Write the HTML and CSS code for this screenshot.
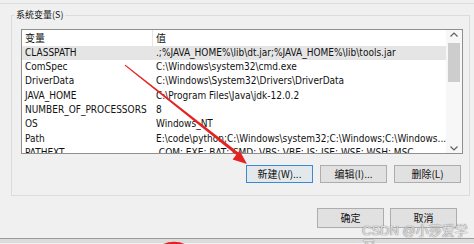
FILE: index.html
```html
<!DOCTYPE html>
<html lang="zh-CN">
<head>
    <meta charset="UTF-8">
    <meta name="viewport" content="width=device-width, initial-scale=1.0">
    <title>环境变量</title>
    <link rel="stylesheet" href="styles.css">
</head>
<body>
    <div class="topline"></div>

    <fieldset class="group">
        <legend>系统变量(S)</legend>
        <div class="listbox">
            <div class="vartable">
                <div class="row head"><div class="c1">变量</div><div class="c2">值</div></div>
                <div class="row sel"><div class="c1">CLASSPATH</div><div class="c2">.;%JAVA_HOME%\lib\dt.jar;%JAVA_HOME%\lib\tools.jar</div></div>
                <div class="row"><div class="c1">ComSpec</div><div class="c2">C:\Windows\system32\cmd.exe</div></div>
                <div class="row"><div class="c1">DriverData</div><div class="c2">C:\Windows\System32\Drivers\DriverData</div></div>
                <div class="row"><div class="c1">JAVA_HOME</div><div class="c2">C:\Program Files\Java\jdk-12.0.2</div></div>
                <div class="row"><div class="c1">NUMBER_OF_PROCESSORS</div><div class="c2">8</div></div>
                <div class="row"><div class="c1">OS</div><div class="c2">Windows_NT</div></div>
                <div class="row"><div class="c1">Path</div><div class="c2">E:\code\python;C:\Windows\system32;C:\Windows;C:\Windows...</div></div>
                <div class="row"><div class="c1">PATHEXT</div><div class="c2">.COM;.EXE;.BAT;.CMD;.VBS;.VBE;.JS;.JSE;.WSF;.WSH;.MSC</div></div>
            </div>
            <div class="vscroll">
                <svg class="sarrow" width="16" height="10" viewBox="0 0 16 10"><path d="M4.5 6.5 L8 3 L11.5 6.5" fill="none" stroke="#606060" stroke-width="1.2"/></svg>
                <div class="thumb"></div>
                <div class="track"></div>
                <svg class="sarrow" width="16" height="10" viewBox="0 0 16 10"><path d="M4.5 3.5 L8 7 L11.5 3.5" fill="none" stroke="#606060" stroke-width="1.2"/></svg>
            </div>
        </div>
        <div class="btnrow">
            <button class="btn focus">新建(W)...</button>
            <button class="btn">编辑(I)...</button>
            <button class="btn">删除(L)</button>
        </div>
    </fieldset>

    <div class="dlgbtns">
        <button class="btn tall">确定</button>
        <button class="btn tall">取消</button>
    </div>

    <div class="taskbar"></div>

    <!-- annotation drawn over the dialog -->
    <svg class="mark" width="474" height="244" viewBox="0 0 474 244">
        <polygon points="124.6,65.6 125.4,64.8 238.4,152.6 236.4,155" fill="#e32222"/>
        <polygon points="247,164 232.6,159.4 239.6,150.6" fill="#e32222"/>
        <ellipse cx="174" cy="257" rx="19" ry="14" fill="none" stroke="#e32222" stroke-width="2.5"/>
    </svg>
    <div class="wm">CSDN @小莎爱学习</div>
</body>
</html>
```

FILE: styles.css
```css
html, body {
    margin: 0;
    padding: 0;
}

body {
    width: 474px;
    height: 244px;
    overflow: hidden;
    position: relative;
    background-color: #f0f0f0;
    color: #111;
    font-family: "DejaVu Sans Condensed", "DejaVu Sans", "Noto Sans CJK SC", sans-serif;
    font-stretch: condensed;
    font-size: 10px;
}

.topline {
    height: 3px;
    border-bottom: 1px solid #dcdcdc;
}

.group {
    margin: 5px 4px 0 11px;
    padding: 8px 6px 12px 9px;
    border: 1px solid #dcdcdc;
    min-width: 0;
}

.group legend {
    margin-left: -7px;
    padding: 0 2px;
    line-height: 12px;
    font-family: "Noto Sans CJK SC", sans-serif;
    font-size: 9px;
}

.listbox {
    display: flex;
    height: 123px;
    border: 1px solid #8f8f8f;
    background-color: #fff;
    overflow: hidden;
}

.vartable {
    flex: 1;
    min-width: 0;
}

.row {
    display: flex;
    height: 14.4px;
    line-height: 14.4px;
    white-space: nowrap;
}

.row.head {
    height: 15.5px;
    line-height: 15.5px;
    font-family: "Noto Sans CJK SC", sans-serif;
}

.row.head .c1 {
    border-right: 1px solid #e5e5e5;
    width: 127px;
}

.row.sel {
    background-color: #e5e5e5;
}

.c1 {
    width: 128px;
    padding-left: 3px;
    flex: none;
}

.c2 {
    padding-left: 3px;
    overflow: hidden;
}

.vscroll {
    width: 16px;
    flex: none;
    display: flex;
    flex-direction: column;
    background-color: #f7f7f7;
}

.sarrow {
    display: block;
    margin: 0 auto;
}

.vscroll .thumb {
    height: 39px;
    margin: 3px 2px 0 2px;
    background-color: #cdcdcd;
}

.vscroll .track {
    flex: 1;
}

.btnrow {
    display: flex;
    justify-content: flex-end;
    gap: 7px;
    margin: 11px 2px 0 0;
}

.btn {
    width: 67px;
    height: 18px;
    padding: 0;
    border: 1px solid #adadad;
    background-color: #e1e1e1;
    color: #111;
    font-family: "Noto Sans CJK SC", sans-serif;
    font-size: 10px;
    line-height: 14px;
}

.btn.focus {
    border-color: #3a8ad6;
    background-color: #e3e8ec;
}

.btn.tall {
    height: 20px;
}

.dlgbtns {
    display: flex;
    justify-content: flex-end;
    gap: 6px;
    margin: 12px 17px 0 0;
}

.taskbar {
    margin-top: 10px;
    height: 4px;
    border-top: 1px solid #9a9a9a;
    background-color: #dcdcdc;
}

.mark {
    position: absolute;
    left: 0;
    top: 0;
}

.wm {
    position: absolute;
    left: 362px;
    top: 223px;
    font-family: "Liberation Sans", "Noto Sans CJK SC", sans-serif;
    font-size: 13px;
    line-height: 15px;
    color: rgba(255, 255, 255, 0.8);
    text-shadow: 0 0 1px #777, 0 0 1px #777;
}
```
